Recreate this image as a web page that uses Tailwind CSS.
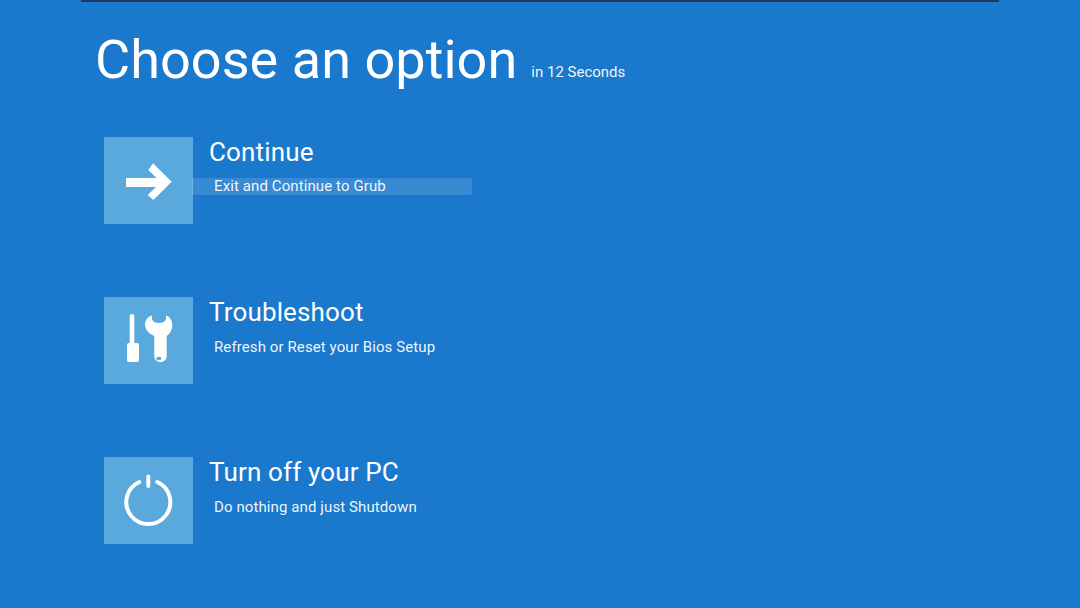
<!DOCTYPE html>
<html lang="en">
<head>
  <meta charset="UTF-8">
  <title>Choose an option</title>
  <script src="https://cdn.jsdelivr.net/npm/@tailwindcss/browser@4"></script>
</head>
<body class="bg-[#1a79cc] h-[608px] w-[1080px] overflow-hidden text-white font-['Roboto',sans-serif]">

  <!-- Top line -->
  <div class="mx-[81px] h-[2px] bg-[#21395f]"></div>

  <!-- Title -->
  <div class="flex items-start pl-[95px] pt-[26px] h-[135px]">
    <h1 class="text-[54px] leading-[64px] font-normal tracking-[0.05px]">Choose an option</h1>
    <span class="ml-[14px] mt-[34px] text-[15px] leading-5 text-white/95">in 12 Seconds</span>
  </div>

  <!-- Options -->
  <div class="flex flex-col gap-[73px] pl-[104px]">
    <div class="flex h-[87px]">
      <div class="w-[89px] h-[87px] shrink-0 bg-[#5aa9dc]">
        <svg width="89" height="87" viewBox="0 0 89 87" fill="white">
          <path d="M22 41H52.500L44.300 33L49 26.300L67.700 44.700L49.300 63L43.700 58L52 50H22Z"/>
        </svg>
      </div>
      <div class="flex flex-col">
        <div class="pl-4 text-[26px] leading-[30px] h-[41px] tracking-[0.15px]">Continue</div>
        <div class="-ml-[1px] w-[280px] h-[17px] bg-white/13 rounded-[2px] pl-[22px] text-[15px] leading-[17px] tracking-[0.1px] text-white/95">Exit and Continue to Grub</div>
      </div>
    </div>

    <div class="flex h-[87px]">
      <div class="w-[89px] h-[87px] shrink-0 bg-[#5aa9dc]">
        <svg width="89" height="87" viewBox="0 0 89 87" fill="white">
          <path d="M25.700 19Q25.700 17 28 17Q30.300 17 30.300 19V46H33Q35 46 35 48V63Q35 65 33 65H25Q23 65 23 63V48Q23 46 25 46H25.700Z"/>
          <path fill-rule="evenodd" d="M44 20.500Q46 19 48 18.500V22Q49 26 55 26Q61 26 62 22V18.500Q64 19 65.500 20.500Q68.300 23.500 68.300 28Q68.300 35 62.700 39V59C62.700 62.500 60 65 56.500 65C53 65 50.300 62.500 50.300 59V39Q41 35 41 28Q41 23.500 44 20.500Z M54.800 59.800A2.700 1.600 0 1 0 54.800 63A2.700 1.600 0 1 0 54.800 59.800Z"/>
        </svg>
      </div>
      <div class="flex flex-col">
        <div class="pl-4 text-[26px] leading-[30px] h-[42px] tracking-[0.15px]">Troubleshoot</div>
        <div class="pl-[21px] text-[15px] leading-[17px] tracking-[0.1px] text-white/95">Refresh or Reset your Bios Setup</div>
      </div>
    </div>

    <div class="flex h-[87px]">
      <div class="w-[89px] h-[87px] shrink-0 bg-[#5aa9dc]">
        <svg width="89" height="87" viewBox="0 0 89 87" fill="none" stroke="white" stroke-width="4" stroke-linecap="round">
          <path d="M35.300 25A22 22 0 1 0 53.300 25"/>
          <path d="M44.300 19.500V29"/>
        </svg>
      </div>
      <div class="flex flex-col">
        <div class="pl-4 text-[26px] leading-[30px] h-[42px] tracking-[0.15px]">Turn off your PC</div>
        <div class="pl-[21px] text-[15px] leading-[17px] tracking-[0.1px] text-white/95">Do nothing and just Shutdown</div>
      </div>
    </div>
  </div>

</body>
</html>
